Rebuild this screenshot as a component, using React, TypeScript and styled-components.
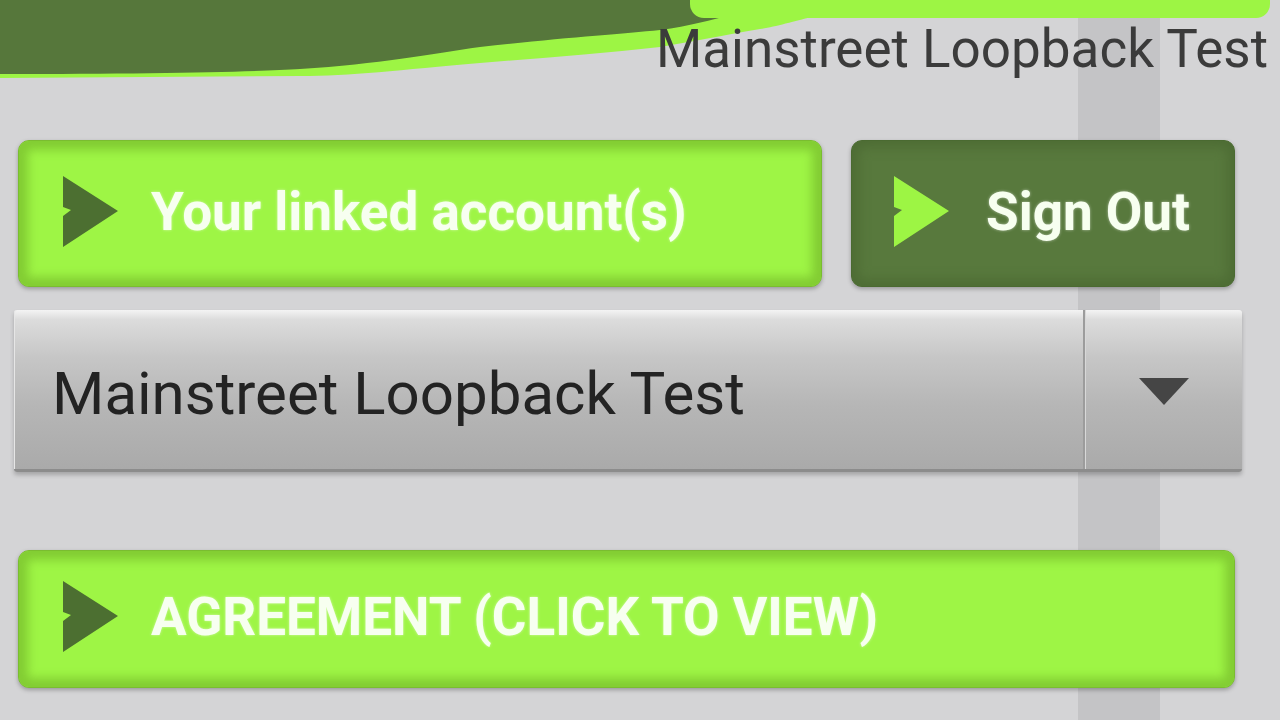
import React from 'react';
import styled, {createGlobalStyle, css} from "styled-components";

const GlobalStyle = createGlobalStyle`
    html, body {
        margin: 0;
        padding: 0;
    }
    body {
        font-family: Roboto, "Noto Sans", "Liberation Sans", sans-serif;
        background-color: #d4d4d6;
        background-image: linear-gradient(to right,
            transparent 1078px, #c4c4c6 1078px, #c4c4c6 1160px, transparent 1160px);
    }
`

type Tone = "light" | "dark";

const Arrow = ({tone}: { tone: Tone }) => (
    <ArrowIcon viewBox="0 0 55 72" aria-hidden>
        <polygon
            points="0,0 55,35 0,71 0,40 8,34 0,31"
            fill={tone === "light" ? "#4c6f31" : "#9df544"}
        />
    </ArrowIcon>
);

// header swoosh: dark green cap with a bright green sweep under it
const Banner = () => (
    <BannerArt viewBox="0 0 1280 90" preserveAspectRatio="none" aria-hidden>
        <path
            d="M820,15 C790,22 775,27 760,29 C720,36 690,42 660,47 C600,54 540,58 480,63 C400,70 350,76 300,76 L0,78 L0,70 L740,14 Z"
            fill="#9df544"/>
        <path
            d="M0,0 L760,0 L760,14 L735,14 C710,20 690,26 660,30 C620,34 560,38 480,47 C430,54 380,64 300,69 C250,72 150,74 0,74 Z"
            fill="#56773b"/>
        <rect x="690" y="-24" width="580" height="42" rx="14" fill="#9df544"/>
    </BannerArt>
);

export default function App() {
    return (
        <>
            <GlobalStyle/>
            <Screen>
                <Header>
                    <Banner/>
                    <Title>Mainstreet Loopback Test</Title>
                </Header>

                <Content>
                    <ButtonRow>
                        <ActionButton tone="light" grow>
                            <Arrow tone="light"/>
                            <Label>Your linked account(s)</Label>
                        </ActionButton>
                        <ActionButton tone="dark" width={384} gap={37} inset={42}>
                            <Arrow tone="dark"/>
                            <Label>Sign Out</Label>
                        </ActionButton>
                    </ButtonRow>

                    <Spinner>
                        <SpinnerValue>Mainstreet Loopback Test</SpinnerValue>
                        <SpinnerToggle>
                            <Caret/>
                        </SpinnerToggle>
                    </Spinner>

                    <ActionButton tone="light" height={138} top={78}>
                        <Arrow tone="light"/>
                        <Label>AGREEMENT (CLICK TO VIEW)</Label>
                    </ActionButton>
                </Content>
            </Screen>
        </>
    );
}

const Screen = styled.div`
    width: 1280px;
    height: 720px;
    overflow: hidden;
    display: flex;
    flex-direction: column;
`

const Header = styled.header`
    position: relative;
    height: 140px;
`

const BannerArt = styled.svg`
    position: absolute;
    top: 0;
    left: 0;
    width: 1280px;
    height: 90px;
`

const Title = styled.h1`
    position: relative;
    margin: 0;
    padding: 23px 12px 0 0;
    text-align: right;
    font-weight: 400;
    font-size: 53px;
    line-height: 52px;
    color: #3b3b3b;
`

const Content = styled.main`
    display: flex;
    flex-direction: column;
    padding: 0 45px 0 18px;
`

const ButtonRow = styled.div`
    display: flex;
    gap: 29px;
`

const ActionButton = styled.button<{
    tone: Tone; grow?: boolean; width?: number; height?: number;
    gap?: number; inset?: number; top?: number
}>`
    display: flex;
    align-items: center;
    box-sizing: border-box;
    gap: ${p => p.gap ?? 33}px;
    height: ${p => p.height ?? 147}px;
    margin-top: ${p => p.top ?? 0}px;
    padding: 0 0 4px ${p => p.inset ?? 44}px;
    border-radius: 11px;
    cursor: pointer;
    font-family: inherit;
    ${p => p.grow ? css`flex: 1;` : css`width: ${p.width}px;`}

    ${p => p.tone === "light" ? css`
        background: #9ef545;
        border: 1px solid #7abd30;
        box-shadow: inset 0 0 10px 9px rgba(126, 198, 48, 0.85),
                    0 2px 4px rgba(0, 0, 0, 0.28);
    ` : css`
        background: #58793d;
        border: 1px solid #4a6a31;
        box-shadow: inset 0 0 12px 6px rgba(72, 103, 48, 0.7),
                    0 2px 4px rgba(0, 0, 0, 0.28);
    `}
`

const ArrowIcon = styled.svg`
    width: 55px;
    height: 72px;
    flex: none;
    filter: blur(0.6px);
`

const Label = styled.span`
    font-weight: 700;
    font-size: 53px;
    color: #f7fff0;
    white-space: nowrap;
    text-shadow: 0 0 3px rgba(255, 255, 255, 0.55);
`

const Spinner = styled.div`
    display: flex;
    height: 162px;
    margin: 23px -7px 0 -4px;
    box-sizing: border-box;
    border-radius: 3px;
    border-bottom: 3px solid #8c8c8c;
    background: linear-gradient(to bottom,
        #f4f4f4 0%, #dcdcdc 6%, #c6c6c6 30%, #b6b6b6 60%, #aaaaaa 100%);
    box-shadow: 0 3px 4px rgba(0, 0, 0, 0.22), inset 1px 0 0 #e6e6e6;
`

const SpinnerValue = styled.div`
    flex: 1;
    display: flex;
    align-items: center;
    padding: 8px 0 0 38px;
    font-size: 60px;
    color: #232323;
`

const SpinnerToggle = styled.div`
    width: 157px;
    display: flex;
    align-items: center;
    justify-content: center;
    border-left: 2px solid #9c9c9c;
    box-shadow: inset 1px 0 0 #d8d8d8;
`

const Caret = styled.span`
    width: 0;
    height: 0;
    margin-top: 4px;
    border-left: 25px solid transparent;
    border-right: 25px solid transparent;
    border-top: 27px solid #454545;
`
